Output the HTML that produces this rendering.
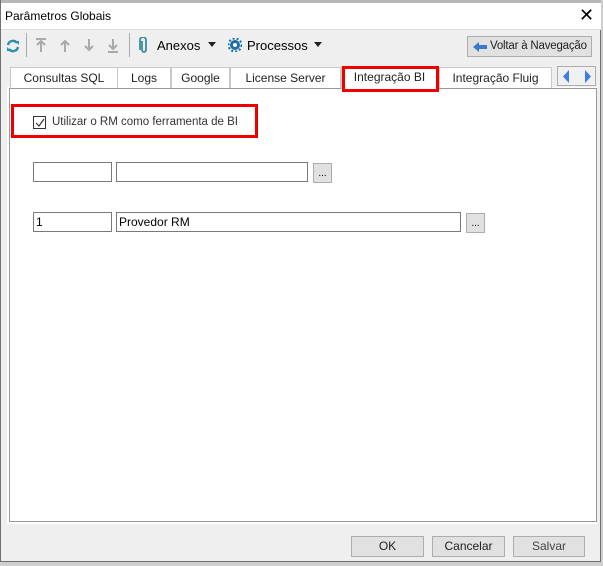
<!DOCTYPE html>
<html><head><meta charset="utf-8"><style>
*{box-sizing:border-box;margin:0;padding:0}
body{width:603px;height:566px;background:#cfcfcf;font-family:"Liberation Sans",sans-serif;font-size:12px;color:#000;position:relative;overflow:hidden}
.win{position:absolute;left:0;top:0;width:601px;height:562px;background:#efefef;border:1px solid #707070;border-top:none}
.title{position:absolute;left:0;top:3px;width:600px;height:27px;background:#fff;border-bottom:1px solid #ddd}
.title span{position:absolute;left:4px;top:6px;font-size:12px}
.abs{position:absolute;white-space:nowrap}
.tab{position:absolute;top:67px;height:21px;border:1px solid #c8c8c8;border-bottom:none;background:#fff;text-align:center;line-height:20px;font-size:12px;color:#222;white-space:nowrap}
.panel{position:absolute;left:6px;top:87px;width:590px;height:437px;background:#fff}
.inner{position:absolute;left:8px;top:88px;width:588px;height:434px;border:1px solid #999;background:#fff}
.inp{position:absolute;height:20px;border:1px solid #7a7a7a;background:#fff;font-size:12px;line-height:18px;padding-left:2px}
.dots{position:absolute;width:19px;height:20px;border:1px solid #adadad;background:#e1e1e1;font-size:10px;text-align:center;line-height:20px}
.btn{position:absolute;top:536px;width:73px;height:21px;border:1px solid #adadad;background:#e1e1e1;text-align:center;line-height:19px;color:#222}
</style></head><body>
<div class="win">
<div class="abs" style="left:0;top:0;width:600px;height:3px;background:#b8b8b8"></div>
<div class="title"><span>Parâmetros Globais</span><span style="left:578px;top:2px;font-size:18px">✕</span></div>
<svg class="abs" style="left:4px;top:38px" width="16" height="16" viewBox="0 0 16 16"><path d="M3 7a5 5 0 0 1 9-2" stroke="#2a8fb0" stroke-width="2.4" fill="none"/><path d="M13 9a5 5 0 0 1-9 2" stroke="#2a8fb0" stroke-width="2.4" fill="none"/><path d="M10 3l4 0 0 4z M6 13l-4 0 0-4z" fill="#2a8fb0"/></svg>
<div class="abs" style="left:25px;top:33px;width:1px;height:24px;background:#aaa"></div>
<svg class="abs" style="left:32px;top:37px" width="90" height="16"><g stroke="#aaa" stroke-width="2" fill="none"><path d="M3 2h10M8 15V4M4 8l4-4 4 4"/><path d="M32 15V4M28 8l4-4 4 4"/><path d="M56 2v11M52 9l4 4 4-4"/><path d="M80 2v10M76 8l4 4 4-4M75 15h10"/></g></svg>
<div class="abs" style="left:128px;top:33px;width:1px;height:24px;background:#aaa"></div>
<svg class="abs" style="left:138px;top:37px" width="10" height="17"><path d="M3 4v9a2 2 0 0 0 4 0V3a3 3 0 0 0-6 0v10" stroke="#3a8aa0" stroke-width="1.8" fill="none"/></svg>
<div class="abs" style="left:156px;top:38px;font-size:13px">Anexos</div>
<div class="abs" style="left:207px;top:42px;border:4px solid transparent;border-top:5px solid #222;border-bottom:none"></div>
<svg class="abs" style="left:227px;top:38px" width="14" height="14" viewBox="0 0 14 14"><circle cx="7" cy="7" r="5" fill="#1c6fa8"/><circle cx="7" cy="7" r="6.5" fill="none" stroke="#1c6fa8" stroke-width="2" stroke-dasharray="2 2"/><circle cx="7" cy="7" r="2" fill="#fff"/></svg>
<div class="abs" style="left:246px;top:38px;font-size:13px">Processos</div>
<div class="abs" style="left:313px;top:42px;border:4px solid transparent;border-top:5px solid #222;border-bottom:none"></div>
<div class="abs" style="left:466px;top:36px;width:125px;height:21px;border:1px solid #adadad;background:#e1e1e1"><svg class="abs" style="left:5px;top:5px" width="14" height="10"><path d="M0 5l6-5v3h8v4H6v3z" fill="#3c78c8"/></svg><span class="abs" style="left:22px;top:3px;color:#222;font-size:11.5px;letter-spacing:-0.2px">Voltar à Navegação</span></div>
<div class="panel"></div>
<div class="inner"></div>
<div class="tab" style="left:9px;width:108px">Consultas SQL</div>
<div class="tab" style="left:116px;width:54px">Logs</div>
<div class="tab" style="left:170px;width:59px">Google</div>
<div class="tab" style="left:229px;width:111px">License Server</div>
<div class="tab" style="left:340px;width:97px;top:66px;height:23px">Integração BI</div>
<div class="abs" style="left:341px;top:66px;width:97px;height:26px;border:3px solid #e00"></div>
<div class="tab" style="left:438px;width:113px">Integração Fluig</div>
<div class="abs" style="left:556px;top:66px;width:39px;height:20px;border:1px solid #adadad;background:#f0f0f0"><svg class="abs" style="left:3px;top:3px" width="33" height="13"><path d="M8 0L2 6.5 8 13z" fill="#3b7fe0"/><path d="M24 0l6 6.5-6 6.5z" fill="#3b7fe0"/></svg></div>
<div class="abs" style="left:10px;top:104px;width:247px;height:34px;border:3px solid #e00"></div>
<div class="abs" style="left:32px;top:116px;width:13px;height:13px;border:1px solid #333;background:#fff"><svg class="abs" style="left:1px;top:1px" width="10" height="10"><path d="M1 5l3 3 5-7" stroke="#333" stroke-width="1.2" fill="none"/></svg></div>
<div class="abs" style="left:51px;top:116px;color:#333;font-size:11.5px">Utilizar o RM como ferramenta de BI</div>
<div class="inp" style="left:32px;top:162px;width:79px"></div>
<div class="inp" style="left:115px;top:162px;width:192px"></div>
<div class="dots" style="left:312px;top:163px">...</div>
<div class="inp" style="left:32px;top:212px;width:79px">1</div>
<div class="inp" style="left:115px;top:212px;width:345px">Provedor RM</div>
<div class="dots" style="left:465px;top:213px">...</div>
<div class="btn" style="left:350px">OK</div>
<div class="btn" style="left:431px">Cancelar</div>
<div class="btn" style="left:512px;width:72px;color:#444">Salvar</div>
</div>
</body></html>
